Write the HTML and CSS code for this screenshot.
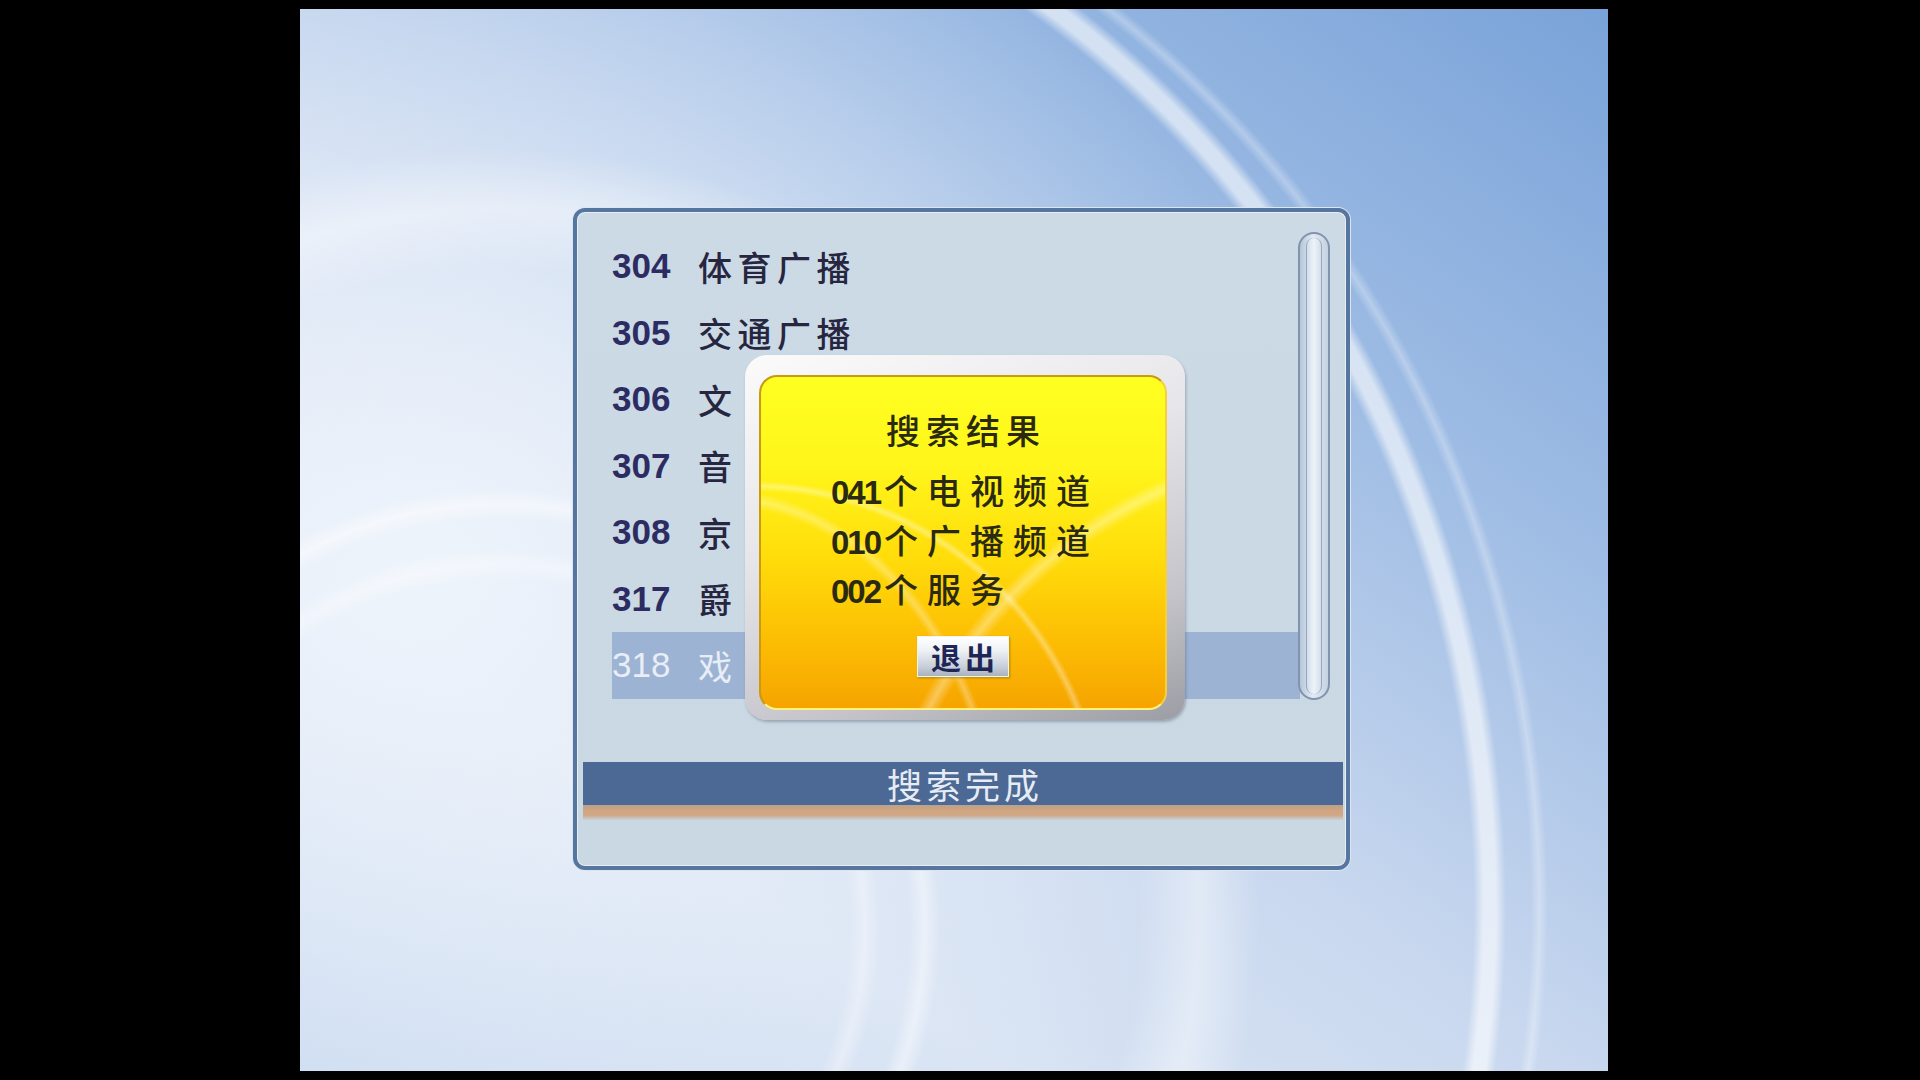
FILE: index.html
```html
<!DOCTYPE html>
<html lang="zh-CN">
<head>
<meta charset="utf-8">
<title>搜索完成</title>
<link rel="stylesheet" href="styles.css">
</head>
<body>
<div class="screen">
  <div class="panel">
    <div class="main">
      <div class="list">
        <div class="row"><span class="num">304</span><span class="name">体育广播</span></div>
        <div class="row"><span class="num">305</span><span class="name">交通广播</span></div>
        <div class="row"><span class="num">306</span><span class="name">文</span></div>
        <div class="row"><span class="num">307</span><span class="name">音</span></div>
        <div class="row"><span class="num">308</span><span class="name">京</span></div>
        <div class="row"><span class="num">317</span><span class="name">爵</span></div>
        <div class="row active"><span class="num">318</span><span class="name">戏</span></div>
      </div>
      <div class="scroll"><div class="scroll-core"></div></div>
    </div>
    <div class="status">搜索完成</div>
    <div class="stripe"></div>

    <div class="popup">
      <div class="popup-inner">
        <div class="title">搜索结果</div>
        <div class="lines">
          <div class="line"><span class="d">041</span><span class="c">个电视频道</span></div>
          <div class="line"><span class="d">010</span><span class="c">个广播频道</span></div>
          <div class="line"><span class="d">002</span><span class="c">个服务</span></div>
        </div>
        <div class="btn">退出</div>
      </div>
    </div>
  </div>
</div>
</body>
</html>
```
FILE: styles.css
```css
html, body {
  margin: 0;
  padding: 0;
  background: #000;
}
body {
  width: 1920px;
  height: 1080px;
  overflow: hidden;
  padding-top: 9px;
  box-sizing: border-box;
  font-family: "Noto Sans CJK SC", "Liberation Sans", sans-serif;
}

.screen {
  margin-left: 300px;
  width: 1308px;
  height: 1062px;
  box-sizing: border-box;
  padding: 199px 0 0 273px;
  background:
    radial-gradient(1010px 1107px at 200px 900px, rgba(255,255,255,0) 96.4%, rgba(255,255,255,.6) 97.4%, rgba(255,255,255,.6) 98.6%, rgba(255,255,255,0) 99.6%),
    radial-gradient(1052px 1123px at 200px 900px, rgba(255,255,255,0) 98%, rgba(255,255,255,.3) 98.8%, rgba(255,255,255,0) 99.6%),
    radial-gradient(760px 760px at 200px 900px, rgba(255,255,255,0) 84%, rgba(255,255,255,.4) 92%, rgba(255,255,255,.15) 97%, rgba(255,255,255,0) 100%),
    radial-gradient(440px 440px at 200px 920px, rgba(255,255,255,0) 93%, rgba(255,255,255,.45) 96.5%, rgba(255,255,255,0) 100%),
    radial-gradient(380px 380px at 200px 920px, rgba(255,255,255,0) 92%, rgba(255,255,255,.35) 96%, rgba(255,255,255,0) 100%),
    radial-gradient(900px 760px at 120px 560px, rgba(240,245,252,.95) 0%, rgba(240,245,252,0) 100%),
    linear-gradient(215deg, #7aa3d9 0%, #9ebce4 28%, #c9d8ef 55%, #d8e3f3 75%, #c2d5ee 100%);
}

.panel {
  position: relative;
  width: 777px;
  height: 662px;
  box-sizing: border-box;
  border: 4px solid #56769f;
  border-radius: 12px;
  background: linear-gradient(180deg, #ccdae5 0%, #c9d8e3 100%);
  box-shadow: inset 0 0 0 1px #e6eef6, 0 0 0 1px #dce6f2;
  padding: 21px 16px 0 35px;
}

.main {
  display: flex;
  align-items: flex-start;
}
.list {
  width: 688px;
}
.row {
  height: 66.5px;
  display: flex;
  align-items: center;
}
.num {
  width: 86px;
  flex: none;
  font-family: "Liberation Sans", sans-serif;
  font-weight: bold;
  font-size: 35px;
  color: #2d2c62;
}
.name {
  font-family: "Noto Sans CJK SC", sans-serif;
  font-weight: 500;
  font-size: 34px;
  letter-spacing: 5.5px;
  color: #262640;
  white-space: nowrap;
}
.row.active {
  background: #9db3d3;
}
.row.active .num {
  color: #e8eef6;
  font-weight: normal;
}
.row.active .name {
  color: #e8eef6;
  font-weight: 400;
}

.scroll {
  margin-left: -2px;
  margin-top: -1px;
  width: 32px;
  height: 468px;
  box-sizing: border-box;
  border: 2px solid #8293ad;
  border-radius: 16px;
  background: linear-gradient(90deg, #b6c6da 0%, #e2eaf3 45%, #c4d2e2 100%);
  padding: 4px 6px;
}
.scroll-core {
  height: 100%;
  border-radius: 10px;
  border-left: 1px solid #97a7be;
  border-right: 1px solid #97a7be;
  background: linear-gradient(90deg, #d2deea, #eef3f8 50%, #d2deea);
  box-sizing: border-box;
}

.status {
  margin: 62px -13px 0 -29px;
  height: 43px;
  background: #4b6994;
  color: #e6ecf4;
  font-family: "Noto Sans CJK SC", sans-serif;
  font-size: 35px;
  line-height: 43px;
  text-align: center;
  letter-spacing: 4px;
  text-indent: 4px;
}
.stripe {
  margin: 0 -13px 0 -29px;
  height: 15px;
  background: linear-gradient(180deg, #b9a28c 0%, #d2a57e 40%, #cfa98a 70%, #c8d2dc 100%);
}

/* popup */
.popup {
  position: absolute;
  left: 168px;
  top: 143px;
  width: 440px;
  height: 365px;
  box-sizing: border-box;
  border-radius: 22px;
  padding: 20px 18px 10px 14px;
  background: linear-gradient(160deg, #fbfbfb 0%, #e6e6ea 40%, #c4c4ca 75%, #9c9ca4 100%);
  box-shadow: 1px 2px 3px rgba(60,70,90,.35);
}
.popup-inner {
  height: 100%;
  box-sizing: border-box;
  border-radius: 18px;
  border: 2px solid #c99a12;
  border-bottom-color: #fff27a;
  border-right-color: #f4d040;
  padding-top: 28px;
  background:
    radial-gradient(520px 520px at 600px 560px, rgba(255,255,255,0) 92%, rgba(255,255,255,.35) 94%, rgba(255,255,255,0) 96%),
    radial-gradient(300px 420px at -40px 520px, rgba(255,255,255,0) 93%, rgba(255,255,255,.3) 95%, rgba(255,255,255,0) 97%),
    radial-gradient(360px 360px at -10px 460px, rgba(255,255,255,0) 96%, rgba(255,255,255,.35) 97.5%, rgba(255,255,255,0) 99%),
    linear-gradient(180deg, #ffff22 0%, #fff51a 28%, #ffdc0a 55%, #fcbd04 80%, #f6a400 100%);
  color: #2a2a12;
}
.title {
  height: 50px;
  line-height: 50px;
  text-align: center;
  font-size: 34px;
  font-weight: 500;
  letter-spacing: 6px;
  text-indent: 6px;
}
.lines {
  margin-top: 10px;
  padding-left: 70px;
}
.line {
  height: 49.5px;
  line-height: 49.5px;
  white-space: nowrap;
}
.line .d {
  font-family: "Liberation Sans", sans-serif;
  font-weight: bold;
  font-size: 33px;
  letter-spacing: -2px;
  margin-right: 4px;
}
.line .c {
  font-family: "Noto Sans CJK SC", sans-serif;
  font-weight: 500;
  font-size: 34px;
  letter-spacing: 9px;
}
.btn {
  margin: 22px auto 0;
  width: 92px;
  height: 41px;
  box-sizing: border-box;
  border: 1px solid #f4f4f0;
  background: linear-gradient(180deg, #ffffff 0%, #eef1f4 35%, #c9d0da 75%, #a9b2c0 100%);
  box-shadow: 1px 1px 2px rgba(90,80,20,.45);
  text-align: center;
  line-height: 38px;
  font-size: 30px;
  font-weight: 700;
  color: #1e2656;
  letter-spacing: 4px;
  text-indent: 4px;
}
```
